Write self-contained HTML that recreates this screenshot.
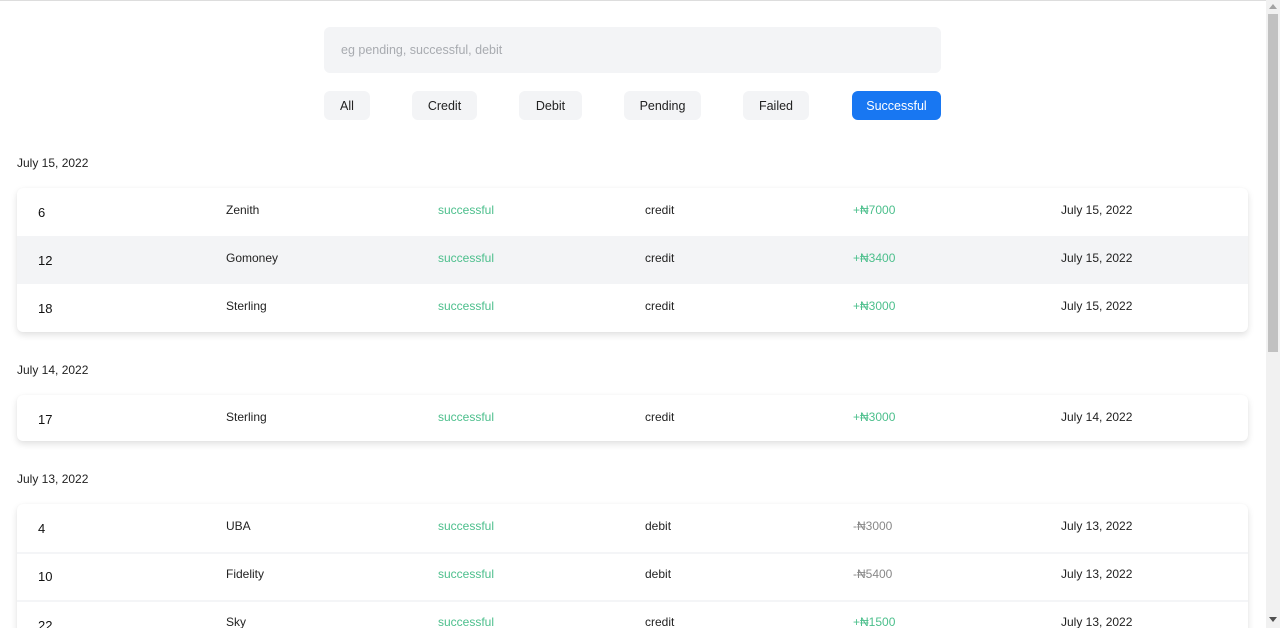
<!DOCTYPE html>
<html><head><meta charset="utf-8"><style>
*{margin:0;padding:0;box-sizing:border-box}
html,body{width:1280px;height:628px;overflow:hidden}
body{background:#fff;font-family:"Liberation Sans",sans-serif;font-size:12px;color:#222;position:relative}
.top{position:absolute;left:0;top:0;width:1266px;height:1px;background:#ddd}
.sb{position:absolute;right:0;top:0;width:14px;height:628px;background:#f1f1f1}
.sb .th{position:absolute;left:2px;top:14px;width:10px;height:338px;background:#c1c1c1}
.sb .up{position:absolute;left:3px;top:4px;border:4px solid transparent;border-bottom:5px solid #a3a3a3;border-top:0}
.sb .dn{position:absolute;left:3px;top:617px;border:4px solid transparent;border-top:5px solid #505050;border-bottom:0}
.search{position:absolute;left:324px;top:27px;width:617px;height:46px;background:#f3f4f6;border-radius:6px;color:#a8abb0;padding:16px 0 0 17px;font-size:12.5px}
.btn{position:absolute;top:91px;height:29px;background:#f3f4f6;border-radius:6px;text-align:center;line-height:30px;color:#222;font-size:12.5px}
.btn.on{background:#1877f2;color:#fff}
.lbl{position:absolute;left:17px;font-size:12px}
.card{position:absolute;left:17px;width:1231px;background:#fff;border-radius:6px;box-shadow:0 3px 7px rgba(0,0,0,.12),0 0 1px rgba(0,0,0,.05);overflow:hidden}
.row{position:relative;height:48px;border-top:2px solid #f4f5f7}
.row:first-child{border-top:0}
.row.h{background:#f3f4f6}
.row span{position:absolute;top:15px}
.c1{left:21px;font-size:13px;top:17px!important;color:#111}
.c2{left:209px}.c3{left:421px;color:#4cbf8c}.c4{left:628px}.c5{left:836px}.c6{left:1044px}
.g{color:#4cbf8c}.d{color:#888}
</style></head><body>
<div class="top"></div>
<div class="sb"><div class="up"></div><div class="th"></div><div class="dn"></div></div>
<div class="search">eg pending, successful, debit</div>
<div class="btn" style="left:324px;width:46px">All</div>
<div class="btn" style="left:412px;width:65px">Credit</div>
<div class="btn" style="left:519px;width:63px">Debit</div>
<div class="btn" style="left:624px;width:77px">Pending</div>
<div class="btn" style="left:743px;width:66px">Failed</div>
<div class="btn on" style="left:852px;width:89px">Successful</div>

<div class="lbl" style="top:156px">July 15, 2022</div>
<div class="card" style="top:188px">
<div class="row"><span class="c1">6</span><span class="c2">Zenith</span><span class="c3">successful</span><span class="c4">credit</span><span class="c5 g">+₦7000</span><span class="c6">July 15, 2022</span></div>
<div class="row h" style="border-top:0"><span class="c1">12</span><span class="c2">Gomoney</span><span class="c3">successful</span><span class="c4">credit</span><span class="c5 g">+₦3400</span><span class="c6">July 15, 2022</span></div>
<div class="row" style="border-top:0"><span class="c1">18</span><span class="c2">Sterling</span><span class="c3">successful</span><span class="c4">credit</span><span class="c5 g">+₦3000</span><span class="c6">July 15, 2022</span></div>
</div>

<div class="lbl" style="top:363px">July 14, 2022</div>
<div class="card" style="top:395px;height:46px">
<div class="row" style="height:46px"><span class="c1">17</span><span class="c2">Sterling</span><span class="c3">successful</span><span class="c4">credit</span><span class="c5 g">+₦3000</span><span class="c6">July 14, 2022</span></div>
</div>

<div class="lbl" style="top:472px">July 13, 2022</div>
<div class="card" style="top:504px">
<div class="row"><span class="c1">4</span><span class="c2">UBA</span><span class="c3">successful</span><span class="c4">debit</span><span class="c5 d">-₦3000</span><span class="c6">July 13, 2022</span></div>
<div class="row" style="height:48px"><span class="c1" style="top:15px!important">10</span><span class="c2" style="top:13px">Fidelity</span><span class="c3" style="top:13px">successful</span><span class="c4" style="top:13px">debit</span><span class="c5 d" style="top:13px">-₦5400</span><span class="c6" style="top:13px">July 13, 2022</span></div>
<div class="row"><span class="c1" style="top:16px!important">22</span><span class="c2" style="top:13px">Sky</span><span class="c3" style="top:13px">successful</span><span class="c4" style="top:13px">credit</span><span class="c5 g" style="top:13px">+₦1500</span><span class="c6" style="top:13px">July 13, 2022</span></div>
</div>
</body></html>
